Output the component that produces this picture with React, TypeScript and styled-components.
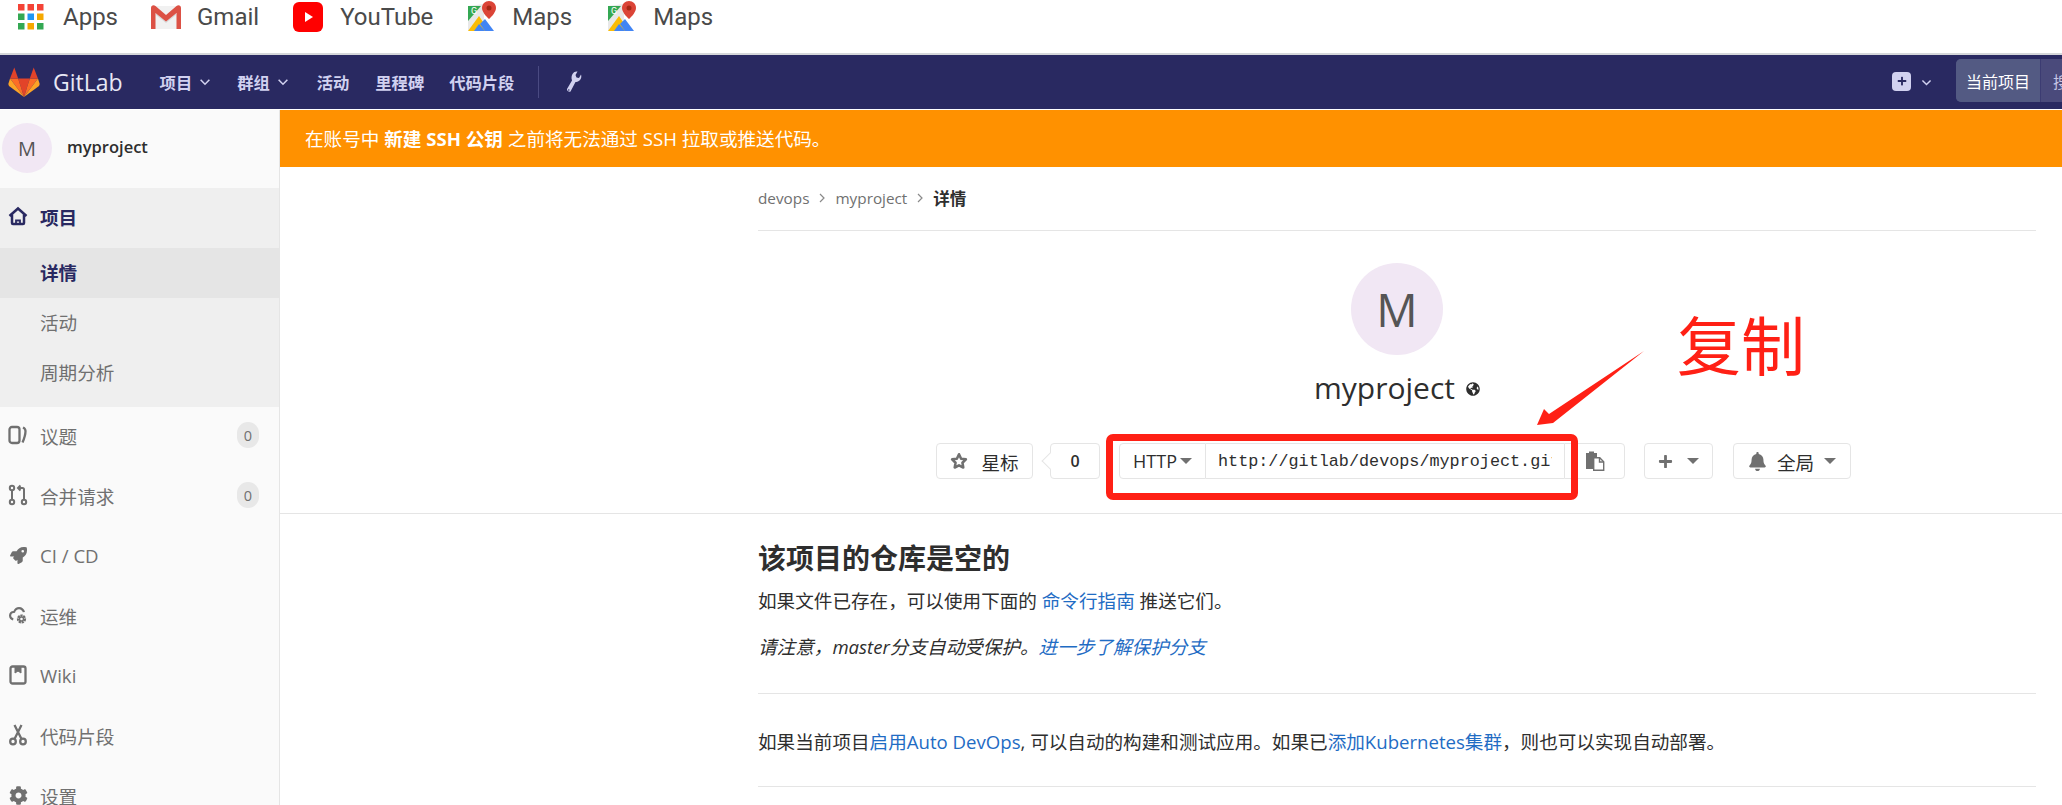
import * as React from 'react';
import styled, { createGlobalStyle } from 'styled-components';
import { FaBell, FaCog, FaGlobeAmericas, FaPlus, FaRocket } from 'react-icons/fa';

const sans = '"Open Sans", "Noto Sans CJK SC", sans-serif';

const Global = createGlobalStyle`
  html, body { margin: 0; padding: 0; background: #fff; }
  body { font-family: ${sans}; overflow: hidden; }
  * { box-sizing: border-box; }
`;

const Page = styled.div`
  position: relative;
  width: 2062px;
  height: 805px;
  overflow: hidden;
  display: flex;
  flex-direction: column;
`;

const Bookmarks = styled.div`
  height: 55px;
  flex: none;
  display: flex;
  align-items: flex-start;
  border-bottom: 2px solid #d5d7da;
  background: #fff;
`;
const Bookmark = styled.div<{ $left: number; $gap: number }>`
  display: flex;
  align-items: center;
  height: 34px;
  margin-left: ${p => p.$left}px;
  gap: ${p => p.$gap}px;
  font-family: 'Roboto', sans-serif;
  font-size: 24px;
  color: #4a4a4a;
`;

const Nav = styled.div`
  height: 55px;
  flex: none;
  display: flex;
  align-items: center;
  background: #292961;
  border-bottom: 1px solid #fff;
  overflow: hidden;
`;
const NavLeft = styled.div`
  width: 1892px;
  flex: none;
  display: flex;
  align-items: center;
  padding-left: 8px;
`;
const Brand = styled.div`
  font-size: 23px;
  color: #e8e8f5;
  margin-left: 13px;
  margin-right: 37px;
  font-family: 'Open Sans', sans-serif;
`;
const NavLink = styled.div<{ $gap?: number }>`
  display: flex;
  align-items: center;
  gap: 6px;
  font-size: 16.3px;
  font-weight: 700;
  color: #d1d1f0;
  margin-right: ${p => p.$gap ?? 25}px;
`;
const NavSep = styled.div`
  width: 1px;
  height: 32px;
  background: #4a4a82;
  margin-left: -1px;
  margin-right: 27px;
`;
const NavRight = styled.div`
  flex: none;
  display: flex;
  align-items: center;
`;
const PlusBox = styled.div`
  width: 19px;
  height: 19px;
  border-radius: 4px;
  background: #d1d1f0;
  color: #292961;
  display: flex;
  align-items: center;
  justify-content: center;
  margin-right: 9px;
  margin-top: -2px;
`;
const NavCaret = styled.span`
  display: flex;
  color: #d1d1f0;
`;
const ScopeGroup = styled.div`
  display: flex;
  height: 43px;
  width: 160px;
  margin-left: 23px;
  margin-top: -3px;
  border-radius: 5px;
  overflow: hidden;
  background: #4a4a7b;
`;
const Scope = styled.div`
  width: 85px;
  display: flex;
  align-items: center;
  justify-content: center;
  background: #535a83;
  border-right: 1px solid #3c3c72;
  color: #fff;
  font-size: 16px;
`;
const ScopeInput = styled.div`
  padding-left: 12px;
  display: flex;
  align-items: center;
  color: #c4c4e4;
  font-size: 16px;
  white-space: nowrap;
`;

const Body = styled.div`
  flex: 1;
  display: flex;
  min-height: 0;
`;
const Sidebar = styled.aside`
  width: 280px;
  flex: none;
  background: #fafafa;
  border-right: 1px solid #e5e5e5;
`;
const ProjectHead = styled.div`
  height: 78px;
  padding: 13px 0 0 2px;
  display: flex;
  align-items: flex-start;
`;
const SideAvatar = styled.div`
  width: 50px;
  height: 50px;
  border-radius: 50%;
  background: #f1e7f4;
  color: #555;
  font-size: 20px;
  display: flex;
  align-items: center;
  justify-content: center;
`;
const ProjectName = styled.div`
  margin-left: 15px;
  margin-top: 12px;
  font-size: 16.5px;
  font-weight: 600;
  color: #2e2e2e;
`;
const ActiveSection = styled.div`
  background: #efefef;
  height: 219px;
`;
const SideRow = styled.div<{ $active?: boolean }>`
  height: 60px;
  display: flex;
  align-items: center;
  padding: 0 0 4px 8px;
  font-size: 18.6px;
  color: ${p => (p.$active ? '#292961' : '#707070')};
  font-weight: ${p => (p.$active ? 700 : 400)};
`;
const SideIcon = styled.span<{ $active?: boolean }>`
  width: 20px;
  height: 20px;
  flex: none;
  margin-right: 12px;
  display: flex;
  align-items: center;
  justify-content: center;
  color: ${p => (p.$active ? '#292961' : '#707070')};
`;
const SubRow = styled.div<{ $active?: boolean; $h: number }>`
  height: ${p => p.$h}px;
  display: flex;
  align-items: center;
  padding: 0 0 4px 40px;
  font-size: 18.6px;
  background: ${p => (p.$active ? '#e5e5e5' : 'transparent')};
  color: ${p => (p.$active ? '#292961' : '#707070')};
  font-weight: ${p => (p.$active ? 700 : 400)};
`;
const Badge = styled.span`
  margin-left: auto;
  margin-right: 20px;
  width: 22px;
  height: 26px;
  border-radius: 11px;
  background: #e8e8e8;
  color: #707070;
  font-size: 14.5px;
  display: flex;
  align-items: center;
  justify-content: center;
`;

const Main = styled.main`
  flex: 1;
  min-width: 0;
`;
const Banner = styled.div`
  height: 57px;
  background: #ff9100;
  color: #fff;
  font-size: 18.6px;
  display: flex;
  align-items: center;
  padding: 0 0 3px 25px;
  white-space: pre;
  b { font-weight: 700; }
`;
const Container = styled.div`
  margin-left: 478px;
  width: 1278px;
`;
const Crumbs = styled.div`
  height: 64px;
  display: flex;
  align-items: center;
  border-bottom: 1px solid #e5e5e5;
  font-size: 15.3px;
  color: #707070;
  padding-bottom: 1px;
`;
const CrumbSep = styled.span`
  display: flex;
  margin: 0 8px;
  color: #8a8a8a;
`;
const CrumbCurrent = styled.span`
  font-size: 16.5px;
  font-weight: 700;
  color: #2e2e2e;
`;
const ProjectPanel = styled.section`
  border-bottom: 1px solid #e5e5e5;
  height: 283px;
  padding-top: 32px;
`;
const PanelInner = styled.div`
  margin-left: 478px;
  width: 1278px;
  display: flex;
  flex-direction: column;
  align-items: center;
`;
const BigAvatar = styled.div`
  width: 92px;
  height: 92px;
  border-radius: 50%;
  background: #f1e7f4;
  color: #555;
  font-size: 46px;
  display: flex;
  align-items: center;
  justify-content: center;
`;
const Title = styled.h1`
  margin: 11px 0 0;
  height: 42px;
  display: flex;
  align-items: center;
  gap: 11px;
  font-size: 30px;
  font-weight: 400;
  color: #2e2e2e;
  svg { margin-top: 4px; }
`;
const Actions = styled.div`
  margin-top: 35px;
  padding-right: 7px;
  display: flex;
  align-items: center;
`;
const Btn = styled.div<{ $w: number; $gap?: number; $after?: number }>`
  width: ${p => p.$w}px;
  height: 36px;
  margin-right: ${p => p.$after ?? 0}px;
  border: 1px solid #e5e5e5;
  border-radius: 4px;
  background: #fff;
  display: flex;
  align-items: center;
  justify-content: center;
  gap: ${p => p.$gap ?? 10}px;
  font-size: 18.6px;
  color: #2e2e2e;
  flex: none;
`;
const CountWrap = styled.div`
  position: relative;
  margin: 0 19px 0 17px;
  &::before {
    content: '';
    position: absolute;
    left: -6px;
    top: 12px;
    width: 11px;
    height: 11px;
    background: #fff;
    border-left: 1px solid #e5e5e5;
    border-bottom: 1px solid #e5e5e5;
    transform: rotate(45deg);
  }
`;
const Count = styled(Btn)`
  font-weight: 600;
  font-size: 16px;
`;
const Clone = styled.div`
  position: relative;
  display: flex;
  height: 36px;
  flex: none;
`;
const Proto = styled.div`
  width: 87px;
  border: 1px solid #e5e5e5;
  border-radius: 4px 0 0 4px;
  display: flex;
  align-items: center;
  justify-content: center;
  gap: 3px;
  font-size: 18px;
  color: #2e2e2e;
`;
const UrlBox = styled.div`
  width: 358px;
  border-top: 1px solid #e5e5e5;
  border-bottom: 1px solid #e5e5e5;
  padding: 0 12px 0 12px;
  display: flex;
  align-items: center;
`;
const UrlText = styled.span`
  display: block;
  width: 100%;
  overflow: hidden;
  font-family: 'Liberation Mono', monospace;
  font-size: 16.8px;
  color: #2e2e2e;
  white-space: nowrap;
`;
const CopyBtn = styled(Btn)`
  border-radius: 0 4px 4px 0;
`;
const Caret = styled.span`
  width: 0;
  height: 0;
  border-left: 6px solid transparent;
  border-right: 6px solid transparent;
  border-top: 6px solid #707070;
`;
const RedBox = styled.div`
  position: absolute;
  left: -13px;
  top: -9px;
  width: 472px;
  height: 66px;
  border: 7px solid #ff2015;
  border-radius: 7px;
  pointer-events: none;
  z-index: 2;
`;
const Note = styled.div`
  position: absolute;
  left: 1677px;
  top: 294px;
  font-size: 64px;
  line-height: 96px;
  color: #ff2015;
  font-family: 'Noto Sans CJK SC', sans-serif;
`;
const ArrowLayer = styled.svg`
  position: absolute;
  left: 1530px;
  top: 345px;
`;

const Empty = styled.h2`
  margin: 24px 0 0;
  height: 38px;
  display: flex;
  align-items: center;
  font-size: 28px;
  font-weight: 700;
  color: #2e2e2e;
`;
const Para = styled.p<{ $top: number; $italic?: boolean }>`
  margin: ${p => p.$top}px 0 0;
  height: 28px;
  line-height: 28px;
  font-size: 18.6px;
  color: #2e2e2e;
  font-style: ${p => (p.$italic ? 'italic' : 'normal')};
  white-space: pre;
`;
const Link = styled.a`
  color: #1f6cc4;
`;
const Rule = styled.div<{ $top: number }>`
  margin-top: ${p => p.$top}px;
  height: 1px;
  background: #e5e5e5;
`;

const Chevron = ({ size = 14 }: { size?: number }) => (
  <svg width={size} height={size} viewBox="0 0 16 16" fill="none" stroke="currentColor" strokeWidth="1.8">
    <path d="M3 5.500l5 5 5-5" />
  </svg>
);

const Tanuki = () => (
  <svg width="32" height="30" viewBox="0 0 36 34">
    <polygon points="18,34 24.6,13 11.4,13" fill="#e24329" />
    <polygon points="18,34 11.4,13 2.2,13" fill="#fc6d26" />
    <polygon points="2.2,13 0.2,19.4 1,21.6 18,34" fill="#fca326" />
    <polygon points="2.2,13 11.4,13 7,0.5" fill="#e24329" />
    <polygon points="18,34 24.6,13 33.8,13" fill="#fc6d26" />
    <polygon points="33.8,13 35.8,19.4 35,21.6 18,34" fill="#fca326" />
    <polygon points="33.8,13 24.6,13 29,0.5" fill="#e24329" />
  </svg>
);

const WrenchIcon = () => (
  <svg width="16" height="22" viewBox="0 0 16 22">
    <path
      d="M1 18L6 9.500C5 6.500 5.500 3 8 1.200 9.200.5 10.500.2 11.500.5L9.500 4l1 2.500L13 7l2-3.500c.8 2 .2 4.500-1.500 6-1.500 1.300-3 1.500-4 1.500L4.500 20.500C3.500 21.500.5 20 1 18z"
      fill="#d1d1f0"
    />
    <circle cx="2.800" cy="19" r="0.800" fill="#292961" />
  </svg>
);

const AppsIcon = () => (
  <svg width="26" height="26" viewBox="0 0 26 26">
    {[0, 1, 2].map(r =>
      [0, 1, 2].map(c => (
        <rect
          key={`${r}${c}`}
          x={c * 9.5}
          y={r * 9.5}
          width="6.5"
          height="6.5"
          fill={[['#f44336', '#f44336', '#f44336'], ['#34a853', '#2196f3', '#f5a800'], ['#34a853', '#f5a800', '#34a853']][r][c]}
        />
      ))
    )}
  </svg>
);

const GmailIcon = () => (
  <svg width="30" height="24" viewBox="0 0 30 24">
    <rect x="1" y="1" width="28" height="23" fill="#f1f1f1" />
    <path d="M5 8l10 8 10-8v2L15 18 5 10z" fill="#d9d9d9" />
    <path d="M0 3c0-2.500 2.500-3.500 4.500-2L15 10 25.500 1c2-1.500 4.500-.5 4.500 2v21h-4.500V8L15 16.500 4.500 8v16H0z" fill="#dc5145" />
  </svg>
);

const YoutubeIcon = () => (
  <svg width="30" height="30" viewBox="0 0 30 30">
    <rect x="0" y="0" width="30" height="30" rx="6" fill="#f00" />
    <polygon points="12,10 20,15 12,20" fill="#fff" />
  </svg>
);

const MapsIcon = () => (
  <svg width="28" height="32" viewBox="0 0 28 32">
    <path d="M0 5l16-2v27L0 30z" fill="#e8e8e8" />
    <path d="M0 5h13L0 20z" fill="#34a853" />
    <path d="M0 30l11-15 10 15z" fill="#fbbc05" />
    <path d="M6 30l5-7 6 7z" fill="#4285f4" />
    <path d="M17 30l-5-7 5-5 9 12z" fill="#4285f4" />
    <path d="M21 0c-4 0-7 3-7 7 0 5 7 11 7 11s7-6 7-11c0-4-3-7-7-7z" fill="#db4437" />
    <circle cx="21" cy="7" r="2.500" fill="#a52714" />
    <text x="3" y="13" fontSize="9" fontFamily="Roboto" fill="#fff">G</text>
  </svg>
);

const HomeIcon = () => (
  <svg width="21" height="21" viewBox="0 0 20 20" fill="none" stroke="currentColor" strokeWidth="2.500">
    <path d="M1.500 9.500L10 2l8.500 7.500" />
    <path d="M4 8v8.500c0 .6.400 1 1 1h10c.6 0 1-.4 1-1V8" />
    <path d="M8 18v-4h4v4" strokeWidth="1.800" />
  </svg>
);
const IssuesIcon = () => (
  <svg width="20" height="22" viewBox="0 0 20 22" fill="none" stroke="currentColor" strokeWidth="2.300">
    <rect x="1.500" y="3" width="10" height="16" rx="2.500" />
    <path d="M15 3.500c2 1 2.500 2 2.500 3.500 0 3-1 7-3 11.500" />
  </svg>
);
const MergeIcon = () => (
  <svg width="20" height="22" viewBox="0 0 20 22" fill="none" stroke="currentColor" strokeWidth="2">
    <circle cx="4" cy="4" r="2.200" />
    <circle cx="4" cy="18" r="2.200" />
    <circle cx="16" cy="18" r="2.200" />
    <path d="M4 6.500v9M16 15.500V5.500c0-1-.6-1.500-1.500-1.500H10M12.500 1.500L10 4l2.500 2.500" />
  </svg>
);
const OpsIcon = () => (
  <svg width="20" height="20" viewBox="0 0 20 20">
    <path d="M5 15.500C2.500 15 1 13 1 10.500 1 8 3 6 5.500 6 6.500 3.500 8.500 2 11 2c3 0 5.500 2 6 5l-2.200.300C14.300 5.500 12.800 4.200 11 4.200c-2 0-3.500 1.300-4 3.500l-1.500.2C4 8 3.200 9.200 3.200 10.500s.8 2.400 2.300 2.800z" fill="currentColor" />
    <circle cx="13.500" cy="14" r="3.400" fill="none" stroke="currentColor" strokeWidth="2.400" strokeDasharray="2.200 .7" />
    <circle cx="13.500" cy="14" r="2" fill="none" stroke="currentColor" strokeWidth="1.400" />
  </svg>
);
const WikiIcon = () => (
  <svg width="18" height="20" viewBox="0 0 18 20" fill="none" stroke="currentColor" strokeWidth="2.300">
    <rect x="1.500" y="1.500" width="15" height="17" rx="2" />
    <path d="M6 1.500V8l3-2 3 2V1.500" fill="currentColor" strokeWidth="1" />
  </svg>
);
const ScissorsIcon = () => (
  <svg width="18" height="22" viewBox="0 0 18 22" fill="none" stroke="currentColor" strokeWidth="2.300">
    <circle cx="4" cy="17.500" r="2.800" />
    <circle cx="14" cy="17.500" r="2.800" />
    <path d="M5.500 15L12.500 1M12.500 15L5.500 1" />
  </svg>
);
const StarIcon = () => (
  <svg width="18" height="18" viewBox="0 0 24 24" fill="none" stroke="#707070" strokeWidth="3.400" strokeLinejoin="round">
    <path d="M12 3l2.800 5.900 6.400.9-4.600 4.500 1.100 6.400L12 17.700l-5.700 3 1.100-6.400L2.800 9.800l6.400-.9z" />
  </svg>
);
const PasteIcon = () => (
  <svg width="20" height="20" viewBox="0 0 20 20">
    <path d="M1 2h11v4H8v12H1z" fill="#707070" />
    <rect x="4" y="0.500" width="5" height="3" fill="#707070" />
    <path d="M8.700 6.700h6l4 4v8.600h-10z" fill="#fff" stroke="#707070" strokeWidth="1.400" />
    <path d="M14.500 6.500v4.500H19" fill="none" stroke="#707070" strokeWidth="1.400" />
  </svg>
);
const CrumbChevron = () => (
  <CrumbSep>
    <svg width="10" height="10" viewBox="0 0 10 10" fill="none" stroke="currentColor" strokeWidth="1.200">
      <path d="M3 1l4 4-4 4" />
    </svg>
  </CrumbSep>
);

const App = () => (
  <Page>
    <Global />
    <Bookmarks>
      <Bookmark $left={18} $gap={19}>
        <AppsIcon />
        Apps
      </Bookmark>
      <Bookmark $left={33} $gap={16}>
        <GmailIcon />
        Gmail
      </Bookmark>
      <Bookmark $left={34} $gap={17}>
        <YoutubeIcon />
        YouTube
      </Bookmark>
      <Bookmark $left={35} $gap={16}>
        <MapsIcon />
        Maps
      </Bookmark>
      <Bookmark $left={36} $gap={17}>
        <MapsIcon />
        Maps
      </Bookmark>
    </Bookmarks>

    <Nav>
      <NavLeft>
        <Tanuki />
        <Brand>GitLab</Brand>
        <NavLink $gap={25}>
          项目
          <Chevron />
        </NavLink>
        <NavLink $gap={27}>
          群组
          <Chevron />
        </NavLink>
        <NavLink $gap={26}>活动</NavLink>
        <NavLink $gap={25}>里程碑</NavLink>
        <NavLink>代码片段</NavLink>
        <NavSep />
        <WrenchIcon />
      </NavLeft>
      <NavRight>
        <PlusBox>
          <FaPlus size={10} />
        </PlusBox>
        <NavCaret>
          <Chevron size={13} />
        </NavCaret>
        <ScopeGroup>
          <Scope>当前项目</Scope>
          <ScopeInput>搜索</ScopeInput>
        </ScopeGroup>
      </NavRight>
    </Nav>

    <Body>
      <Sidebar>
        <ProjectHead>
          <SideAvatar>M</SideAvatar>
          <ProjectName>myproject</ProjectName>
        </ProjectHead>
        <ActiveSection>
          <SideRow $active>
            <SideIcon $active>
              <HomeIcon />
            </SideIcon>
            项目
          </SideRow>
          <SubRow $active $h={50}>详情</SubRow>
          <SubRow $h={50}>活动</SubRow>
          <SubRow $h={50}>周期分析</SubRow>
        </ActiveSection>
        <SideRow>
          <SideIcon>
            <IssuesIcon />
          </SideIcon>
          议题
          <Badge>0</Badge>
        </SideRow>
        <SideRow>
          <SideIcon>
            <MergeIcon />
          </SideIcon>
          合并请求
          <Badge>0</Badge>
        </SideRow>
        <SideRow>
          <SideIcon>
            <FaRocket size={17} />
          </SideIcon>
          CI / CD
        </SideRow>
        <SideRow>
          <SideIcon>
            <OpsIcon />
          </SideIcon>
          运维
        </SideRow>
        <SideRow>
          <SideIcon>
            <WikiIcon />
          </SideIcon>
          Wiki
        </SideRow>
        <SideRow>
          <SideIcon>
            <ScissorsIcon />
          </SideIcon>
          代码片段
        </SideRow>
        <SideRow>
          <SideIcon>
            <FaCog size={19} />
          </SideIcon>
          设置
        </SideRow>
      </Sidebar>

      <Main>
        <Banner>
          在账号中 <b>新建 SSH 公钥</b> 之前将无法通过 SSH 拉取或推送代码。
        </Banner>
        <Container>
          <Crumbs>
            devops
            <CrumbChevron />
            myproject
            <CrumbChevron />
            <CrumbCurrent>详情</CrumbCurrent>
          </Crumbs>
        </Container>
        <ProjectPanel>
          <PanelInner>
            <BigAvatar>M</BigAvatar>
            <Title>
              myproject
              <FaGlobeAmericas size={14} />
            </Title>
            <Actions>
              <Btn $w={97} $gap={13}>
                <StarIcon />
                星标
              </Btn>
              <CountWrap>
                <Count $w={50}>0</Count>
              </CountWrap>
              <Clone>
                <Proto>
                  HTTP
                  <Caret />
                </Proto>
                <UrlBox>
                  <UrlText>http://gitlab/devops/myproject.git</UrlText>
                </UrlBox>
                <RedBox />
              </Clone>
              <CopyBtn $w={61} $after={19}>
                <PasteIcon />
              </CopyBtn>
              <Btn $w={69} $gap={14} $after={20}>
                <FaPlus size={15} color="#707070" />
                <Caret />
              </Btn>
              <Btn $w={118}>
                <FaBell size={19} color="#707070" />
                全局
                <Caret />
              </Btn>
            </Actions>
          </PanelInner>
        </ProjectPanel>
        <Container>
          <Empty>该项目的仓库是空的</Empty>
          <Para $top={11}>
            如果文件已存在，可以使用下面的 <Link>命令行指南</Link> 推送它们。
          </Para>
          <Para $top={18} $italic>
            请注意，master分支自动受保护。<Link>进一步了解保护分支</Link>
          </Para>
          <Rule $top={32} />
          <Para $top={34}>
            如果当前项目<Link>启用Auto DevOps</Link>, 可以自动的构建和测试应用。如果已<Link>添加Kubernetes集群</Link>，则也可以实现自动部署。
          </Para>
          <Rule $top={30} />
        </Container>
      </Main>
    </Body>

    <Note>复制</Note>
    <ArrowLayer width="120" height="85" viewBox="0 0 120 85">
      <polygon points="114,6 23,78 7,80 14,64 19,69" fill="#ff2015" />
    </ArrowLayer>
  </Page>
);

export default App;
